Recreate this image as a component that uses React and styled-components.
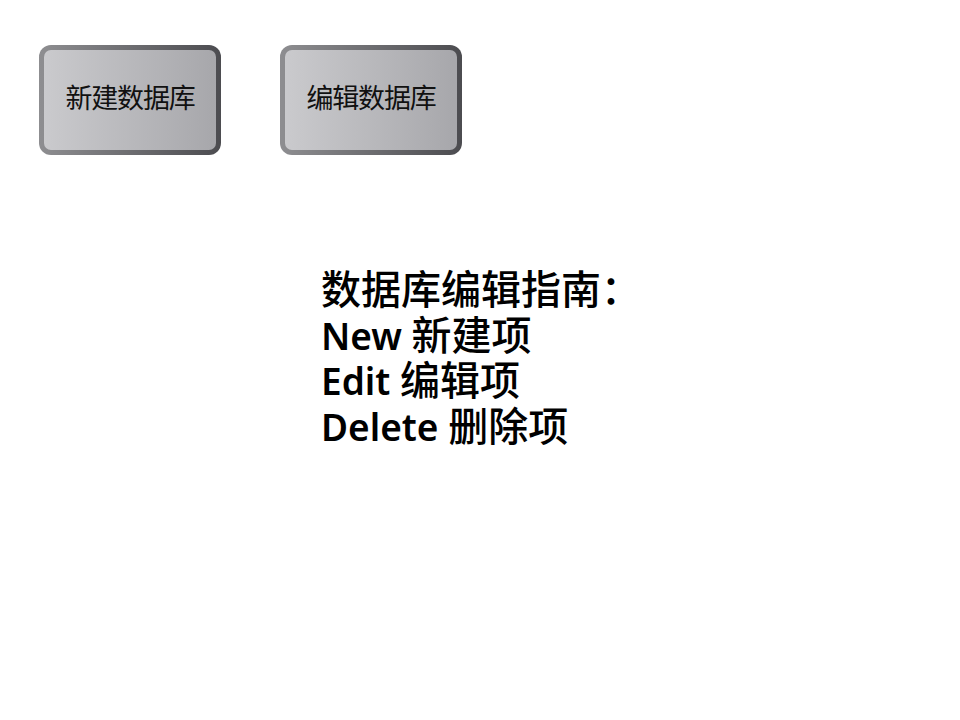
import React from "react";
import styled, { createGlobalStyle } from "styled-components";

const Global = createGlobalStyle`
  html, body { margin: 0; padding: 0; background: #ffffff; }
  body { font-family: "Noto Sans", "Noto Sans CJK SC", sans-serif; }
`;

const Page = styled.div`
  width: 960px;
  height: 720px;
  display: flex;
  flex-direction: column;
  box-sizing: border-box;
  padding: 45px 0 0 39px;
`;

const Toolbar = styled.div`
  display: flex;
  gap: 59px;
`;

const Button = styled.button`
  width: 182px;
  height: 110px;
  box-sizing: border-box;
  border-radius: 12px;
  border: 5px solid transparent;
  background:
    linear-gradient(90deg, #cacacd, #a7a7ab) padding-box,
    linear-gradient(90deg, #8e8e91, #4c4c50) border-box;
  font-family: "Noto Sans CJK SC", sans-serif;
  font-size: 27px;
  letter-spacing: -1.2px;
  line-height: 1;
  color: #111;
  padding: 0 0 8px 0;
  cursor: pointer;
`;

const Guide = styled.div`
  margin: 112px 0 0 282px;
  font-family: "Noto Sans", "Noto Sans CJK SC", sans-serif;
  font-weight: 600;
  font-size: 37px;
  line-height: 45.7px;
  color: #000;
`;

const Line = styled.div`
  white-space: nowrap;
`;

const Han = styled.span`
  font-family: "Noto Sans CJK SC", sans-serif;
  font-weight: 500;
  font-size: 40px;
  line-height: 0;
`;

export default function App() {
  return (
    <>
      <Global />
      <Page>
        <Toolbar>
          <Button>新建数据库</Button>
          <Button>编辑数据库</Button>
        </Toolbar>
        <Guide>
          <Line><Han>数据库编辑指南：</Han></Line>
          <Line>New <Han>新建项</Han></Line>
          <Line>Edit <Han>编辑项</Han></Line>
          <Line>Delete <Han>删除项</Han></Line>
        </Guide>
      </Page>
    </>
  );
}
